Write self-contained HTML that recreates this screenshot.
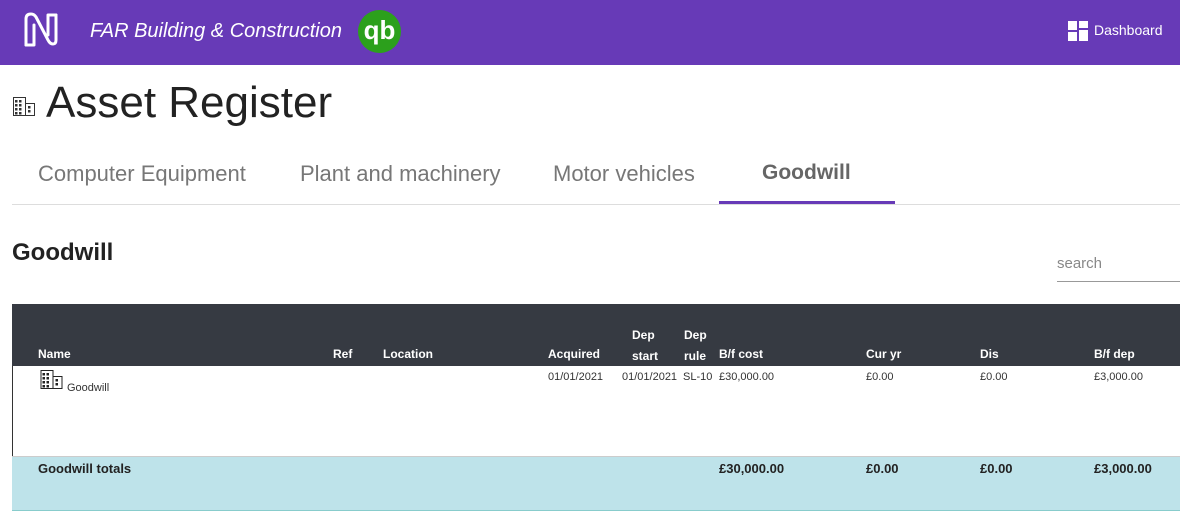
<!DOCTYPE html>
<html><head><style>
body{margin:0;width:1180px;height:529px;overflow:hidden;background:#fff;font-family:"Liberation Sans",sans-serif;color:#222;position:relative}
.a{position:absolute;white-space:nowrap}
.hdr{position:absolute;left:0;top:0;width:1180px;height:65px;background:#673ab7}
.th{color:#fff;font-weight:bold;font-size:12px}
.td{font-size:11px;color:#333}
.tt{font-weight:bold;font-size:13px;color:#222}
</style></head><body>
<div class="hdr">
<svg class="a" style="left:22px;top:11px" width="38" height="38" viewBox="0 0 38 38"><path d="M4 34 V8 Q4 3 9 3 Q12 3 14 6 L26 29 Q28 33 31 33 Q34 33 34 29 V4" fill="none" stroke="#fff" stroke-width="3" stroke-linejoin="round" stroke-linecap="round"/><path d="M4 34 H12 V14 M34 4 H26 V24" fill="none" stroke="#fff" stroke-width="3" stroke-linejoin="round" stroke-linecap="round"/></svg>
<div class="a" style="left:90px;top:20px;color:#fff;font-style:italic;font-size:20px">FAR Building &amp; Construction</div>
<div class="a" style="left:358px;top:10px;width:43px;height:43px;border-radius:50%;background:#2ca01c;color:#fff;font-weight:bold;font-size:26px;text-align:center;line-height:40px">qb</div>
<div class="a" style="left:1068px;top:21px;width:20px;height:20px">
<div class="a" style="left:0;top:0;width:9px;height:9px;background:#fff"></div><div class="a" style="left:11px;top:0;width:9px;height:7px;background:#fff"></div><div class="a" style="left:0;top:11px;width:9px;height:9px;background:#fff"></div><div class="a" style="left:11px;top:9px;width:9px;height:11px;background:#fff"></div></div>
<div class="a" style="left:1094px;top:22px;color:#fff;font-size:14px">Dashboard</div>
</div>
<svg class="a" style="left:13px;top:97px" width="22" height="19" viewBox="0 0 22 19"><rect x="0.5" y="0.5" width="12" height="18" fill="#fff" stroke="#333"/><rect x="12.5" y="6.5" width="9" height="12" fill="#fff" stroke="#333"/><g fill="#333"><rect x="2" y="3" width="2.5" height="2.5"/><rect x="6" y="3" width="2.5" height="2.5"/><rect x="2" y="7" width="2.5" height="2.5"/><rect x="6" y="7" width="2.5" height="2.5"/><rect x="2" y="11" width="2.5" height="2.5"/><rect x="6" y="11" width="2.5" height="2.5"/><rect x="2" y="15" width="2.5" height="2.5"/><rect x="6" y="15" width="2.5" height="2.5"/><rect x="15" y="9" width="2.5" height="2.5"/><rect x="15" y="13" width="2.5" height="2.5"/></g></svg>
<div class="a" style="left:46px;top:78px;font-size:44px;color:#222">Asset Register</div>
<div class="a" style="left:38px;top:161px;font-size:22px;color:#777">Computer Equipment</div>
<div class="a" style="left:300px;top:161px;font-size:22px;color:#777">Plant and machinery</div>
<div class="a" style="left:553px;top:161px;font-size:22px;color:#777">Motor vehicles</div>
<div class="a" style="left:762px;top:161px;font-size:21px;color:#666;font-weight:bold">Goodwill</div>
<div class="a" style="left:12px;top:204px;width:1168px;height:1px;background:#ddd"></div>
<div class="a" style="left:719px;top:201px;width:176px;height:3px;background:#673ab7"></div>
<div class="a" style="left:12px;top:239px;font-size:24px;font-weight:bold">Goodwill</div>
<div class="a" style="left:1057px;top:255px;font-size:15px;color:#888">search</div>
<div class="a" style="left:1057px;top:281px;width:123px;height:1px;background:#999"></div>
<div class="a" style="left:12px;top:304px;width:1168px;height:62px;background:#363a42"></div>
<div class="a" style="left:12px;top:366px;width:1px;height:143px;background:#333"></div>
<div class="a th" style="left:38px;top:347px">Name</div>
<div class="a th" style="left:333px;top:347px">Ref</div>
<div class="a th" style="left:383px;top:347px">Location</div>
<div class="a th" style="left:548px;top:347px">Acquired</div>
<div class="a th" style="left:632px;top:325px;line-height:21px">Dep<br>start</div>
<div class="a th" style="left:684px;top:325px;line-height:21px">Dep<br>rule</div>
<div class="a th" style="left:719px;top:347px">B/f cost</div>
<div class="a th" style="left:866px;top:347px">Cur yr</div>
<div class="a th" style="left:980px;top:347px">Dis</div>
<div class="a th" style="left:1094px;top:347px">B/f dep</div>
<svg class="a" style="left:40px;top:370px" width="23" height="19" viewBox="0 0 22 19"><rect x="0.5" y="0.5" width="12" height="18" fill="#fff" stroke="#222"/><rect x="12.5" y="6.5" width="9" height="12" fill="#fff" stroke="#222"/><g fill="#222"><rect x="2" y="3" width="2.5" height="2.5"/><rect x="6" y="3" width="2.5" height="2.5"/><rect x="2" y="7" width="2.5" height="2.5"/><rect x="6" y="7" width="2.5" height="2.5"/><rect x="2" y="11" width="2.5" height="2.5"/><rect x="6" y="11" width="2.5" height="2.5"/><rect x="2" y="15" width="2.5" height="2.5"/><rect x="6" y="15" width="2.5" height="2.5"/><rect x="15" y="9" width="2.5" height="2.5"/><rect x="15" y="13" width="2.5" height="2.5"/></g></svg>
<div class="a td" style="left:67px;top:382px">Goodwill</div>
<div class="a td" style="left:548px;top:371px">01/01/2021</div>
<div class="a td" style="left:622px;top:371px">01/01/2021</div>
<div class="a td" style="left:683px;top:371px">SL-10</div>
<div class="a td" style="left:719px;top:371px">£30,000.00</div>
<div class="a td" style="left:866px;top:371px">£0.00</div>
<div class="a td" style="left:980px;top:371px">£0.00</div>
<div class="a td" style="left:1094px;top:371px">£3,000.00</div>
<div class="a" style="left:12px;top:456px;width:1168px;height:53px;background:#bee3ea;border-top:1px solid #ccc;border-bottom:1px solid #8cc"></div>
<div class="a tt" style="left:38px;top:461px">Goodwill totals</div>
<div class="a tt" style="left:719px;top:461px">£30,000.00</div>
<div class="a tt" style="left:866px;top:461px">£0.00</div>
<div class="a tt" style="left:980px;top:461px">£0.00</div>
<div class="a tt" style="left:1094px;top:461px">£3,000.00</div>
</body></html>
